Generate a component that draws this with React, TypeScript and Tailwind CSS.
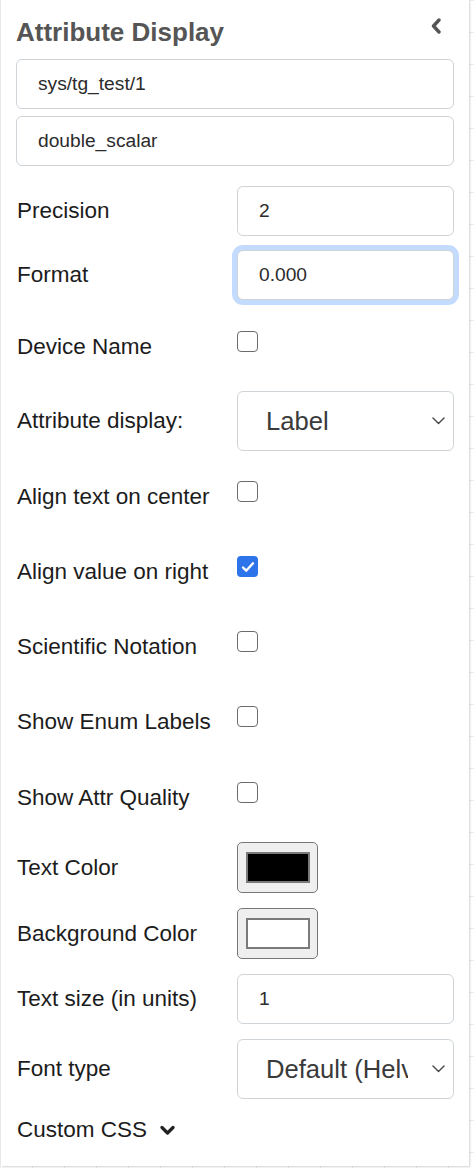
import React from 'react';

const font = { fontFamily: '"Liberation Sans", Arial, sans-serif' };

const Checkbox: React.FC<{ checked?: boolean }> = ({ checked = false }) =>
  checked ? (
    <span className="mt-1 flex h-[21px] w-[21px] items-center justify-center rounded-[4px] bg-[#2d74eb]">
      <svg width="14" height="12" viewBox="0 0 14 12" fill="none">
        <path d="M2 6.5l3.2 3.2L12 2.3" stroke="white" strokeWidth="2.4" strokeLinecap="round" strokeLinejoin="round" />
      </svg>
    </span>
  ) : (
    <span className="mt-1 block h-[21px] w-[21px] rounded-[4px] border-[1.5px] border-[#6b6b6b] bg-white" />
  );

const SelectArrow = () => (
  <svg width="13" height="8" viewBox="0 0 13 8" fill="none" className="shrink-0">
    <path d="M1 1l5.5 5.5L12 1" stroke="#444" strokeWidth="1.4" strokeLinecap="round" strokeLinejoin="round" />
  </svg>
);

const ColorBox: React.FC<{ color: string }> = ({ color }) => (
  <div className="flex h-[51px] w-[81px] items-center justify-center rounded-[5px] border border-[#777] bg-[#efefef]">
    <div className={`h-[31px] w-[64px] border-2 border-[#7a7a7a] ${color}`} />
  </div>
);

interface RowProps {
  label: string;
  className: string;
  children: React.ReactNode;
  top?: boolean;
}

const Row: React.FC<RowProps> = ({ label, className, children, top = false }) => (
  <div className={`flex ${className}`}>
    <div className="flex w-[221px] shrink-0 items-center pl-[1px] text-[22.5px] text-[#1c1c1c]">{label}</div>
    <div className={`flex flex-1 ${top ? 'items-start' : 'items-center'}`}>{children}</div>
  </div>
);

const textInput = 'flex h-[50px] w-full items-center rounded-[6px] border border-[#cfd4d9] bg-white text-[19.2px] text-[#2b2b2b]';

export default function App() {
  return (
    <div
      className="min-h-[1168px] w-[474px] bg-white bg-[linear-gradient(#ececec_1px,transparent_1px),linear-gradient(90deg,#ececec_1px,transparent_1px)] bg-[size:32px_32px]"
      style={font}
    >
      <div className="ml-[1px] w-[468px] bg-white px-[15px] pb-[21px] shadow-[1px_1px_2px_rgba(0,0,0,0.18)]">
        {/* Header */}
        <div className="flex h-[59px] justify-between">
          <span className="mt-[14px] text-[26px] font-bold leading-[36px] text-[#555]">Attribute Display</span>
          <svg width="10" height="16" viewBox="0 0 10 16" fill="none" className="mr-[13px] mt-[18px]">
            <path d="M8 2L2.5 8L8 14" stroke="#555" strokeWidth="3.4" strokeLinecap="round" strokeLinejoin="round" />
          </svg>
        </div>

        {/* Device / attribute */}
        <div className="flex flex-col gap-[7px]">
          <div className={`${textInput} pl-[21px]`}>sys/tg_test/1</div>
          <div className={`${textInput} pl-[21px]`}>double_scalar</div>
        </div>

        <Row label="Precision" className="mt-[20px] h-[50px]">
          <div className={`${textInput} pl-[21px]`}>2</div>
        </Row>
        <Row label="Format" className="mt-[14px] h-[50px]">
          <div className={`${textInput} border-[#86b7fe] pl-[21px] shadow-[0_0_0_5px_rgba(13,110,253,0.25)]`}>0.000</div>
        </Row>

        <Row label="Device Name" className="mt-[27px] h-[40px]" top>
          <Checkbox />
        </Row>

        <Row label="Attribute display:" className="mt-[24px] h-[60px]">
          <div className="flex h-[60px] w-full items-center justify-between rounded-[6px] border border-[#cfd4d9] bg-white pl-[28px] pr-[8px] text-[25.6px] text-[#3a3a3a]">
            <span>Label</span>
            <SelectArrow />
          </div>
        </Row>

        <Row label="Align text on center" className="mt-[26px] h-[40px]" top>
          <Checkbox />
        </Row>
        <Row label="Align value on right" className="mt-[35px] h-[40px]" top>
          <Checkbox checked />
        </Row>
        <Row label="Scientific Notation" className="mt-[35px] h-[40px]" top>
          <Checkbox />
        </Row>
        <Row label="Show Enum Labels" className="mt-[35px] h-[40px]" top>
          <Checkbox />
        </Row>
        <Row label="Show Attr Quality" className="mt-[36px] h-[40px]" top>
          <Checkbox />
        </Row>

        <Row label="Text Color" className="mt-[24px] h-[51px]">
          <ColorBox color="bg-black" />
        </Row>
        <Row label="Background Color" className="mt-[15px] h-[51px]">
          <ColorBox color="bg-white" />
        </Row>

        <Row label="Text size (in units)" className="mt-[15px] h-[50px]">
          <div className={`${textInput} pl-[21px]`}>1</div>
        </Row>

        <Row label="Font type" className="mt-[15px] h-[60px]">
          <div className="flex h-[60px] w-full items-center justify-between rounded-[6px] border border-[#cfd4d9] bg-white pl-[28px] pr-[8px] text-[25.6px] text-[#3a3a3a]">
            <span className="w-[142px] overflow-hidden whitespace-nowrap">Default (Helvetica)</span>
            <SelectArrow />
          </div>
        </Row>

        {/* Custom CSS toggle */}
        <div className="mt-[16px] flex h-[30px] items-center gap-[13px] pl-[1px] text-[22.5px] text-[#1c1c1c]">
          <span>Custom CSS</span>
          <svg width="15" height="11" viewBox="0 0 15 11" fill="none">
            <path d="M2 2.5l5.5 5.5L13 2.5" stroke="#222" strokeWidth="3.2" strokeLinecap="round" strokeLinejoin="round" />
          </svg>
        </div>
      </div>
    </div>
  );
}
